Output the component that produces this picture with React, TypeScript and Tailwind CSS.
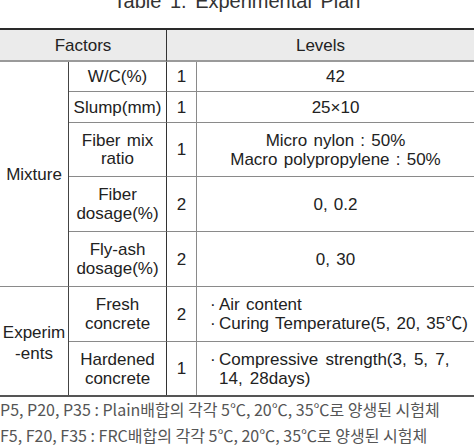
const line = "border-[#8a8a8a]";

function Cell({
  className = "",
  children,
}: {
  className?: string;
  children?: React.ReactNode;
}) {
  return (
    <div className={`flex items-center justify-center text-center ${className}`}>
      {children}
    </div>
  );
}

function Bullet({ children }: { children: React.ReactNode }) {
  return (
    <div className="flex">
      <span className="w-[9px] shrink-0">·</span>
      <span>{children}</span>
    </div>
  );
}

export default function App() {
  return (
    <div
      className="w-[474px] h-[446px] overflow-hidden bg-white text-[#222] text-[17px] [word-spacing:1.5px]"
      style={{ fontFamily: '"Liberation Sans", Arial, "Noto Sans CJK KR", sans-serif' }}
    >
      <div className="h-[28px] text-center text-[20px] leading-[3px] text-[#333] [word-spacing:3px]">
        Table 1. Experimental Plan
      </div>

      <div className="grid grid-cols-[69px_98px_30px_1fr] grid-rows-[32px_30px_31px_54px_55px_55px_55px_53px] border-t-2 border-b-2 border-t-[#2a2a2a] border-b-[#555] leading-[19px]">
        {/* header */}
        <Cell className="col-span-2 bg-[#ebebeb] border-b-2 border-b-[#9a9a9a] border-r border-r-[#333]">
          Factors
        </Cell>
        <Cell className="col-span-2 bg-[#ebebeb] border-b-2 border-b-[#9a9a9a]">Levels</Cell>

        {/* mixture */}
        <Cell className={`row-span-5 border-b ${line} border-r border-r-[#444]`}>Mixture</Cell>

        <Cell className={`border-b ${line} border-r border-r-[#333]`}>W/C(%)</Cell>
        <Cell className={`border-b ${line} border-r`}>1</Cell>
        <Cell className={`border-b ${line}`}>42</Cell>

        <Cell className={`border-b ${line} border-r border-r-[#333]`}>Slump(mm)</Cell>
        <Cell className={`border-b ${line} border-r`}>1</Cell>
        <Cell className={`border-b ${line}`}>25×10</Cell>

        <Cell className={`border-b ${line} border-r border-r-[#333] leading-[18px]`}>
          Fiber mix
          <br />
          ratio
        </Cell>
        <Cell className={`border-b ${line} border-r`}>1</Cell>
        <Cell className={`border-b ${line}`}>
          Micro nylon : 50%
          <br />
          Macro polypropylene : 50%
        </Cell>

        <Cell className={`border-b ${line} border-r border-r-[#333]`}>
          Fiber
          <br />
          dosage(%)
        </Cell>
        <Cell className={`border-b ${line} border-r`}>2</Cell>
        <Cell className={`border-b ${line}`}>0, 0.2</Cell>

        <Cell className={`border-b ${line} border-r border-r-[#333]`}>
          Fly-ash
          <br />
          dosage(%)
        </Cell>
        <Cell className={`border-b ${line} border-r`}>2</Cell>
        <Cell className={`border-b ${line}`}>0, 30</Cell>

        {/* experiments */}
        <Cell className="row-span-2 border-r border-r-[#444] leading-[21px] pt-[4px]">
          Experim
          <br />
          -ents
        </Cell>

        <Cell className={`border-b ${line} border-r border-r-[#333]`}>
          Fresh
          <br />
          concrete
        </Cell>
        <Cell className={`border-b ${line} border-r`}>2</Cell>
        <div className={`flex flex-col justify-center pl-[13px] border-b ${line}`}>
          <Bullet>Air content</Bullet>
          <Bullet>Curing Temperature(5, 20, 35℃)</Bullet>
        </div>

        <Cell className="border-r border-r-[#333]">
          Hardened
          <br />
          concrete
        </Cell>
        <Cell className={`border-r ${line}`}>1</Cell>
        <div className="flex flex-col justify-center pl-[13px] [word-spacing:2.5px]">
          <Bullet>Compressive strength(3, 5, 7, 14, 28days)</Bullet>
        </div>
      </div>

      <div
        className="-mt-[1px] text-[16px] text-[#555] leading-[26px] whitespace-nowrap [word-spacing:0px]"
        style={{ fontFamily: '"Liberation Sans Narrow", "Noto Sans CJK KR", sans-serif' }}
      >
        <div>P5, P20, P35 : Plain배합의 각각 5℃, 20℃, 35℃로 양생된 시험체</div>
        <div>F5, F20, F35 : FRC배합의 각각 5℃, 20℃, 35℃로 양생된 시험체</div>
      </div>
    </div>
  );
}
